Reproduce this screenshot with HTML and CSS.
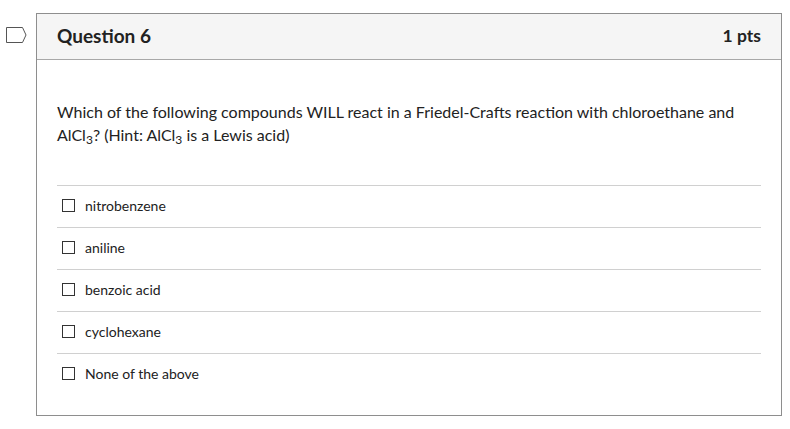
FILE: index.html
```html
<!DOCTYPE html>
<html lang="en">
<head>
<meta charset="utf-8">
<link rel="stylesheet" href="styles.css">
</head>
<body>
<div class="page">
  <div class="flag-col">
    <svg class="flag" width="21" height="16" viewBox="0 0 21 16">
      <path d="M0.5 0.5 H16.5 L20 8 L16.5 15.5 H0.5 Z" fill="#fff" stroke="#555" stroke-width="1"/>
    </svg>
  </div>
  <div class="card">
    <div class="card-header">
      <h2 class="q-title">Question 6</h2>
      <span class="q-pts">1 pts</span>
    </div>
    <div class="card-body">
      <p class="q-text">Which of the following compounds WILL react in a Friedel-Crafts reaction with chloroethane and AlCl<sub>3</sub>? (Hint: AlCl<sub>3</sub> is a Lewis acid)</p>
      <ul class="answers">
        <li class="answer"><span class="box"></span><span>nitrobenzene</span></li>
        <li class="answer"><span class="box"></span><span>aniline</span></li>
        <li class="answer"><span class="box"></span><span>benzoic acid</span></li>
        <li class="answer"><span class="box"></span><span>cyclohexane</span></li>
        <li class="answer"><span class="box"></span><span>None of the above</span></li>
      </ul>
    </div>
  </div>
</div>
</body>
</html>
```
FILE: styles.css
```css
* { box-sizing: border-box; }
html, body { margin: 0; padding: 0; background: #fff; }
body {
  font-family: Lato, "Liberation Sans", sans-serif;
  color: #222;
}
.page {
  display: flex;
  padding-top: 13px;
}
.flag-col {
  width: 36px;
  padding-top: 14px;
  padding-left: 6px;
}
.flag { display: block; }
.card {
  width: 746px;
  border: 1px solid #8e8e8e;
}
.card-header {
  height: 46px;
  background: #f5f5f5;
  border-bottom: 1px solid #a8a8a8;
  display: flex;
  align-items: center;
  justify-content: space-between;
  padding: 0 20px 2px 20px;
}
.q-title {
  margin: 0;
  font-size: 19px;
  font-weight: 700;
}
.q-pts {
  font-size: 17.5px;
  font-weight: 700;
}
.card-body {
  padding: 40px 20px 20px 20px;
}
.q-text {
  margin: 0 0 39px 0;
  font-size: 16px;
  line-height: 23px;
}
.q-text sub {
  font-size: 12px;
  vertical-align: -3px;
  line-height: 0;
}
.answers {
  list-style: none;
  margin: 0;
  padding: 0;
}
.answer {
  height: 42px;
  border-top: 1px solid #d0d0d0;
  display: flex;
  align-items: center;
  gap: 10px;
  padding-left: 5px;
  padding-bottom: 3px;
  font-size: 14px;
}
.box {
  width: 13px;
  height: 13px;
  border: 1px solid #333;
  background: #fff;
  flex: none;
}
```
